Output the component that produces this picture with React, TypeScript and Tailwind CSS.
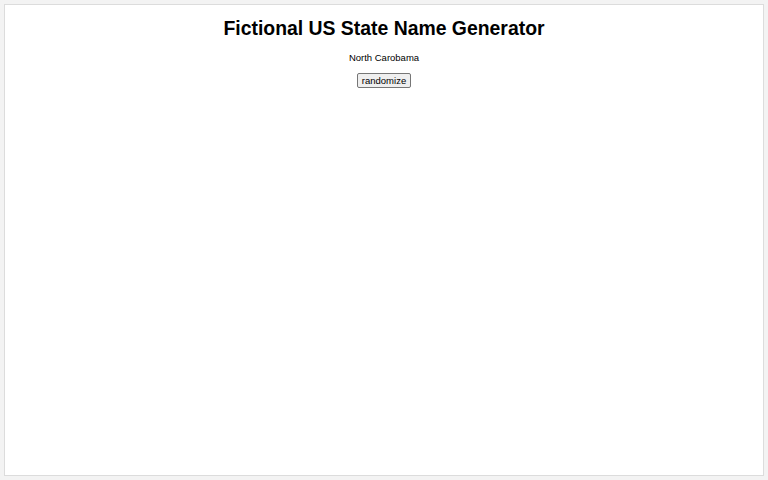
export default function App() {
  return (
    <div className="h-[480px] w-[768px] bg-[#f3f3f3] p-[4px] font-['Liberation_Sans',Arial,sans-serif]">
      <div className="flex h-[472px] flex-col items-center border border-[#dcdcdc] bg-white">
        <h1 className="mt-[10px] text-[19.4px] font-bold leading-[26px] text-black">
          Fictional US State Name Generator
        </h1>
        <p className="mt-[11px] text-[9.5px] leading-[12px] text-black">North Carobama</p>
        <button className="mt-[9px] rounded-[2px] border border-[#767676] bg-[#efefef] px-[4px] py-[1px] text-[9.5px] leading-[11px] text-black">
          randomize
        </button>
      </div>
    </div>
  );
}
